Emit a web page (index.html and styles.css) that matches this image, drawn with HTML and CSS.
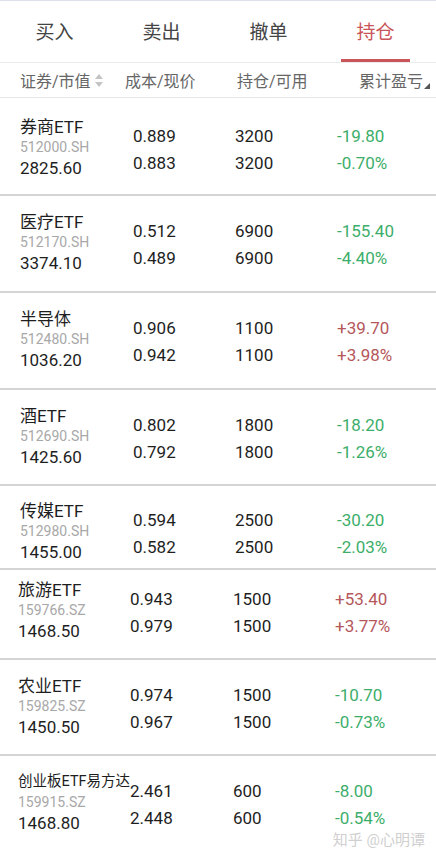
FILE: index.html
```html
<!DOCTYPE html>
<html lang="zh-CN">
<head>
    <meta charset="UTF-8">
    <title>持仓</title>
    <link rel="stylesheet" href="styles.css">
</head>
<body>
<div class="page">
    <div class="tabs">
        <div class="tab">买入</div>
        <div class="tab">卖出</div>
        <div class="tab">撤单</div>
        <div class="tab on">持仓</div>
    </div>

    <div class="thead">
        <div class="th">证券/市值
            <svg class="sort" width="8" height="13" viewBox="0 0 8 13">
                <polygon points="4,0 8,5 0,5" fill="#c4c4c4"/>
                <polygon points="0,8 8,8 4,13" fill="#c4c4c4"/>
            </svg>
        </div>
        <div class="th">成本/现价</div>
        <div class="th">持仓/可用</div>
        <div class="th th-last">累计盈亏
            <svg class="corner" width="6" height="6" viewBox="0 0 6 6">
                <polygon points="6,0 6,6 0,6" fill="#555"/>
            </svg>
        </div>
    </div>

    <div class="list">
        <div class="row first">
            <div class="stock"><div class="name">券商ETF</div><div class="code">512000.SH</div><div class="mv">2825.60</div></div>
            <div class="col"><div>0.889</div><div>0.883</div></div>
            <div class="col"><div>3200</div><div>3200</div></div>
            <div class="col down"><div>-19.80</div><div>-0.70%</div></div>
        </div>
        <div class="row">
            <div class="stock"><div class="name">医疗ETF</div><div class="code">512170.SH</div><div class="mv">3374.10</div></div>
            <div class="col"><div>0.512</div><div>0.489</div></div>
            <div class="col"><div>6900</div><div>6900</div></div>
            <div class="col down"><div>-155.40</div><div>-4.40%</div></div>
        </div>
        <div class="row">
            <div class="stock"><div class="name">半导体</div><div class="code">512480.SH</div><div class="mv">1036.20</div></div>
            <div class="col"><div>0.906</div><div>0.942</div></div>
            <div class="col"><div>1100</div><div>1100</div></div>
            <div class="col up"><div>+39.70</div><div>+3.98%</div></div>
        </div>
        <div class="row low">
            <div class="stock"><div class="name">酒ETF</div><div class="code">512690.SH</div><div class="mv">1425.60</div></div>
            <div class="col"><div>0.802</div><div>0.792</div></div>
            <div class="col"><div>1800</div><div>1800</div></div>
            <div class="col down"><div>-18.20</div><div>-1.26%</div></div>
        </div>
        <div class="row cut">
            <div class="stock"><div class="name">传媒ETF</div><div class="code">512980.SH</div><div class="mv">1455.00</div></div>
            <div class="col"><div>0.594</div><div>0.582</div></div>
            <div class="col"><div>2500</div><div>2500</div></div>
            <div class="col down"><div>-30.20</div><div>-2.03%</div></div>
        </div>
        <div class="row shift tight">
            <div class="stock"><div class="name">旅游ETF</div><div class="code">159766.SZ</div><div class="mv">1468.50</div></div>
            <div class="col"><div>0.943</div><div>0.979</div></div>
            <div class="col"><div>1500</div><div>1500</div></div>
            <div class="col up"><div>+53.40</div><div>+3.77%</div></div>
        </div>
        <div class="row shift low">
            <div class="stock"><div class="name">农业ETF</div><div class="code">159825.SZ</div><div class="mv">1450.50</div></div>
            <div class="col"><div>0.974</div><div>0.967</div></div>
            <div class="col"><div>1500</div><div>1500</div></div>
            <div class="col down"><div>-10.70</div><div>-0.73%</div></div>
        </div>
        <div class="row shift last">
            <div class="stock"><div class="name small">创业板ETF易方达</div><div class="code">159915.SZ</div><div class="mv">1468.80</div></div>
            <div class="col"><div>2.461</div><div>2.448</div></div>
            <div class="col"><div>600</div><div>600</div></div>
            <div class="col down"><div>-8.00</div><div>-0.54%</div></div>
            <div class="mark">知乎 @心明谭</div>
        </div>
    </div>
</div>
</body>
</html>
```

FILE: styles.css
```css
* {
    margin: 0;
    padding: 0;
    box-sizing: border-box;
}
body {
    background: #fff;
    font-family: Roboto, "Noto Sans CJK SC", sans-serif;
    color: #1e1e1e;
}
.page {
    width: 436px;
    height: 854px;
    overflow: hidden;
}

/* 顶部标签 */
.tabs {
    display: grid;
    grid-template-columns: repeat(4, 107px);
    padding-left: 1px;
    height: 62px;
    border-top: 1px solid #dde0ea;
}
.tab {
    position: relative;
    display: flex;
    align-items: center;
    justify-content: center;
    font-size: 19px;
    color: #444;
    padding-bottom: 2px;
}
.tab.on {
    color: #c9555a;
}
.tab.on::after {
    content: "";
    position: absolute;
    left: 19px;
    right: 19px;
    bottom: 0;
    height: 3px;
    background: #c9555a;
}

/* 表头 */
.thead {
    display: grid;
    grid-template-columns: 105px 112px 122px 1fr;
    align-items: center;
    height: 35px;
    padding-left: 20px;
    border-top: 1px solid #ececec;
    font-size: 16px;
    color: #666;
}
.th {
    display: flex;
    align-items: center;
    white-space: nowrap;
}
.sort {
    margin-left: 4px;
}
.th-last {
    align-items: flex-end;
}
.corner {
    margin-left: 1px;
    margin-bottom: 3px;
}

/* 持仓列表 */
.list {
    border-top: 1px solid #e6e6e6;
}
.row {
    position: relative;
    display: grid;
    grid-template-columns: 113px 102px 102px 1fr;
    height: 97px;
    padding: 16px 0 0 20px;
    border-bottom: 2px solid #d4d4d4;
}
.row.first {
    height: 98px;
    padding-top: 19px;
}
.row.low {
    height: 96px;
}
.row.cut {
    height: 84px;
    padding-top: 15px;
}
.row.tight {
    height: 90px;
    padding-top: 10px;
}
.row.shift {
    padding-left: 18px;
    grid-template-columns: 112px 103px 102px 1fr;
}
.row.last {
    height: 100px;
    border-bottom: none;
}
.name {
    font-size: 17px;
    line-height: 20px;
    white-space: nowrap;
}
.name.small {
    font-size: 14.5px;
}
.code {
    font-size: 14px;
    line-height: 21px;
    color: #a8a8a8;
}
.mv {
    font-size: 17px;
    line-height: 21px;
}
.col {
    padding-top: 6px;
    font-size: 17px;
    line-height: 27px;
}
.col.down {
    color: #3dae6a;
}
.col.up {
    color: #b5575b;
}
.mark {
    position: absolute;
    right: 11px;
    bottom: 8px;
    font-size: 15px;
    line-height: 16px;
    color: #d0d0d0;
}
```
